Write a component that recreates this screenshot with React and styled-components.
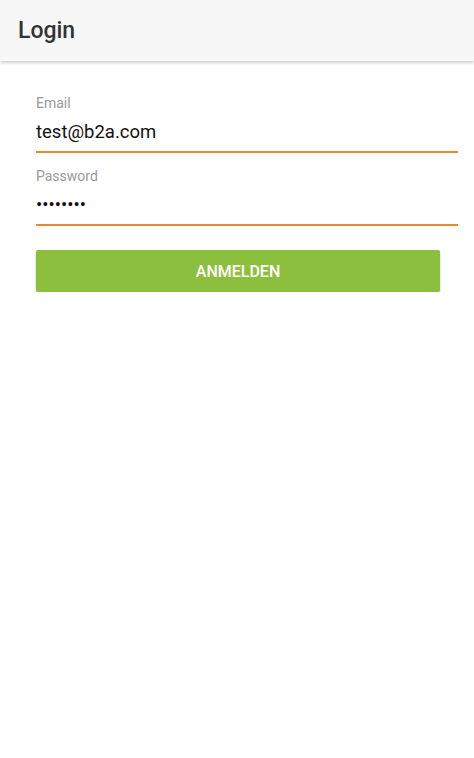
import React, { useState } from "react";
import styled, { createGlobalStyle } from "styled-components";

const GlobalStyle = createGlobalStyle`
  body {
    margin: 0;
    background: #ffffff;
    font-family: Roboto, "Noto Sans", sans-serif;
  }
`;

const Header = styled.header`
  height: 61px;
  background: #f7f7f7;
  box-shadow: 0 2px 3px rgba(0, 0, 0, 0.18);
  display: flex;
  align-items: center;
  padding-left: 18px;
`;

const Titulo = styled.h1`
  margin: 0;
  font-size: 23px;
  font-weight: 500;
  color: #333333;
`;

const Formulario = styled.form`
  padding: 31px 16px 0 36px;
  display: flex;
  flex-direction: column;
`;

const Campo = styled.label`
  display: flex;
  flex-direction: column;
  margin-bottom: 12px;
`;

const Etiqueta = styled.span`
  font-size: 14px;
  color: #9a9a9a;
  line-height: 22px;
`;

const Entrada = styled.input`
  border: none;
  border-bottom: 2px solid #e8892f;
  outline: none;
  padding: 8px 0 8px;
  font-family: Roboto, "Noto Sans", sans-serif;
  font-size: 18.5px;
  line-height: 21px;
  height: 21px;
  box-sizing: content-box;
  color: #111111;
  background: transparent;
`;

const BotonAnmelden = styled.button`
  margin: 12px 18px 0 0;
  height: 42px;
  border: none;
  border-radius: 2px;
  background: #8cbf3d;
  color: #ffffff;
  font-family: Roboto, "Noto Sans", sans-serif;
  font-size: 16px;
  font-weight: 500;
  box-shadow: 0 2px 3px rgba(0, 0, 0, 0.22);
  cursor: pointer;
`;

const App = () => {
  const [email, setEmail] = useState("test@b2a.com");
  const [password, setPassword] = useState("12345678");

  return (
    <>
      <GlobalStyle />
      <Header>
        <Titulo>Login</Titulo>
      </Header>
      <Formulario onSubmit={(e) => e.preventDefault()}>
        <Campo>
          <Etiqueta>Email</Etiqueta>
          <Entrada
            type="text"
            value={email}
            onChange={(e) => setEmail(e.target.value)}
          />
        </Campo>
        <Campo>
          <Etiqueta>Password</Etiqueta>
          <Entrada
            type="password"
            value={password}
            onChange={(e) => setPassword(e.target.value)}
          />
        </Campo>
        <BotonAnmelden type="submit">ANMELDEN</BotonAnmelden>
      </Formulario>
    </>
  );
};

export default App;
